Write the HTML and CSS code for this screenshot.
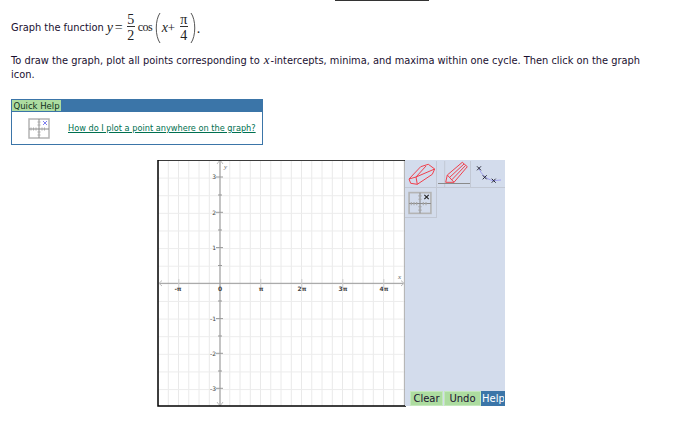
FILE: index.html
```html
<!DOCTYPE html>
<html lang="en">
<head>
    <meta charset="UTF-8">
    <meta name="viewport" content="width=device-width, initial-scale=1.0">
    <title>Graph the function</title>
    <link rel="stylesheet" href="styles.css">
</head>
<body>
    <svg width="0" height="0" class="defs">
        <symbol id="plot-icon" viewBox="0 0 22 21">
            <rect x="1" y="1" width="20" height="19" fill="none" stroke="#b4b4b4" stroke-width="1.500"/>
            <path d="M1 11H21M11 1V20" stroke="#8a8a8a" fill="none"/>
            <path d="M3 9.500V12.500M5.500 9.500V12.500M8 9.500V12.500M14 9.500V12.500M16.500 9.500V12.500M9.500 4H12.500M9.500 7H12.500M9.500 14H12.500M9.500 17H12.500" stroke="#a8a8a8" fill="none"/>
            <path d="M15 3L19 7M19 3L15 7" stroke="currentColor" fill="none"/>
        </symbol>
    </svg>

    <div class="top-bar"></div>

    <div class="page">
        <div class="question">
            <span>Graph the function</span>
            <span class="math">
                <i class="m-y">y</i>
                <span class="m-eq">=</span>
                <span class="frac frac-a"><span class="num">5</span><span class="den">2</span></span>
                <span class="m-cos">cos</span>
                <svg class="paren paren-l" width="7" height="32" viewBox="0 0 7 32"><path d="M6 1C1 8 1 24 6 31" fill="none" stroke="#555"/></svg>
                <i class="m-x">x</i>
                <span class="m-plus">+</span>
                <span class="frac frac-b"><span class="num">&pi;</span><span class="den">4</span></span>
                <svg class="paren paren-r" width="7" height="32" viewBox="0 0 7 32"><path d="M1 1C6 8 6 24 1 31" fill="none" stroke="#555"/></svg>
                <span class="m-dot">.</span>
            </span>
        </div>

        <p class="directions">To draw the graph, plot all points corresponding to <i class="x-var">x</i>-intercepts, minima, and maxima within one cycle. Then click on the graph icon.</p>

        <div class="quick-help">
            <div class="help-head"><span class="help-tab">Quick Help</span></div>
            <div class="help-body">
                <svg class="help-icon"><use href="#plot-icon"/></svg>
                <a href="#" class="help-link">How do I plot a point anywhere on the graph?</a>
            </div>
        </div>

        <div class="graph-row">
            <svg class="plot" width="249" height="247" viewBox="157 160 249 247">
                <defs>
                    <pattern id="grid-v" patternUnits="userSpaceOnUse" x="158.500" y="0" width="10.250" height="20">
                        <path d="M10 0V20" stroke="#e6e6e6" stroke-width="1.200"/>
                    </pattern>
                    <pattern id="grid-h" patternUnits="userSpaceOnUse" x="0" y="160" width="20" height="17.620">
                        <path d="M0 0H20" stroke="#ececec" stroke-width="1.200" transform="translate(0 0.400)"/>
                    </pattern>
                </defs>
                <rect x="158" y="160" width="247" height="246" fill="#fff"/>
                <rect x="158" y="160" width="247" height="246" fill="url(#grid-v)"/>
                <rect x="158" y="160" width="247" height="246" fill="url(#grid-h)"/>

                <path d="M220 161V405" stroke="#c4c4c4" stroke-width="2"/>
                <path d="M160 283.300H403" stroke="#999" stroke-width="1"/>
                <path d="M217 164L220 160L223 164M217 402L220 406L223 402M162 280.500L159 283.300L162 286M401 280.500L404 283.300L401 286" fill="none" stroke="#bbb"/>

                <path d="M216 177H223M218 195H222M216 212.300H223M218 230H222M216 247.600H223M218 265.500H222M218 301H222M216 318.600H223M218 336H222M216 353.300H223M218 371H222M216 388.300H223" stroke="#999" fill="none"/>
                <path d="M178.800 279V288M260.800 279V288M301.800 279V288M342.800 279V288M383.800 279V288" stroke="#ccc" fill="none"/>

                <g class="tick-y" text-anchor="end">
                    <text x="216" y="179">3</text>
                    <text x="216" y="214.500">2</text>
                    <text x="216" y="250">1</text>
                    <text x="216" y="321">-1</text>
                    <text x="216" y="356">-2</text>
                    <text x="216" y="391">-3</text>
                </g>
                <g class="tick-x" text-anchor="middle">
                    <text x="178" y="291">-&pi;</text>
                    <text x="220" y="291">0</text>
                    <text x="261" y="291">&pi;</text>
                    <text x="302" y="291">2&pi;</text>
                    <text x="343" y="291">3&pi;</text>
                    <text x="384" y="291">4&pi;</text>
                </g>
                <text class="axis-name" x="224" y="169">y</text>
                <text class="axis-name" x="398" y="279">x</text>

                <rect x="158" y="160" width="247.500" height="246" fill="none" stroke="#000" stroke-width="1.500"/>
            </svg>

            <div class="toolbar">
                <div class="tools">
                    <div class="tool">
                        <svg width="32" height="27" viewBox="0 0 32 27" fill="none" stroke="#f0404c">
                            <path d="M4 18L15.700 5.700L23.300 3.300L29.700 8L27.300 13.300L12.300 23.300L5.700 22.300Z"/>
                            <path d="M4 18L11 16L29.700 8M11 16L12.300 23.300M11 16L21 5"/>
                        </svg>
                    </div>
                    <div class="tool">
                        <svg width="33" height="27" viewBox="0 0 33 27" fill="none">
                            <path d="M7.700 0V27" stroke="#c2c8d4"/>
                            <path d="M1 22.500H33" stroke="#8a8a8a"/>
                            <path d="M8.700 21.300L10.300 14L25.300 1.300L30.300 5.700L17 21.300ZM10.300 14L17 21.300M12.500 16.500L27 3M14.800 18.800L28.500 4.500" stroke="#f0404c"/>
                        </svg>
                    </div>
                    <div class="tool">
                        <svg width="33" height="27" viewBox="0 0 33 27" fill="none">
                            <path d="M8 7.300C10 13 15 18 22 19.700L30 19" stroke="#a0a0ee"/>
                            <path d="M6 5.300L10 9.300M10 5.300L6 9.300M11.700 14.300L15.700 18.300M15.700 14.300L11.700 18.300M20.700 17.700L24.700 21.700M24.700 17.700L20.700 21.700" stroke="#2a2a3a"/>
                        </svg>
                    </div>
                    <div class="tool tool-graph">
                        <svg class="graph-icon"><use href="#plot-icon"/></svg>
                    </div>
                </div>
                <div class="tool-buttons">
                    <button class="btn btn-clear">Clear</button>
                    <button class="btn btn-undo">Undo</button>
                    <button class="btn btn-help">Help</button>
                </div>
            </div>
        </div>
    </div>
</body>
</html>
```

FILE: styles.css
```css
html, body { margin: 0; padding: 0; background: #fff; }
body { font-family: "DejaVu Sans", Verdana, sans-serif; font-size: 9.850px; color: #1a1030; }
.defs { position: absolute; }
.top-bar { width: 94px; height: 1px; margin-left: 335px; background: #333; }
.page { padding: 0 11px; }

.question { display: flex; align-items: center; height: 33px; margin-top: 10px; }
.math { display: flex; align-items: center; margin-left: 3px; font-family: "Liberation Serif", serif; font-size: 14px; color: #222; }
.m-y { width: 8px; }
.m-eq { width: 8px; }
.m-plus { width: 9px; font-size: 13px; }
.m-x { width: 6px; margin-left: 1px; }
.m-cos { width: 14px; margin-left: 3px; font-size: 12px; letter-spacing: -0.600px; }
.frac { display: flex; flex-direction: column; align-items: center; width: 8px; margin-left: 4px; line-height: 13px; }
.frac-b { margin-left: 3px; }
.num { width: 100%; text-align: center; border-bottom: 1px solid #333; }
.den { margin-top: 2px; }
.paren { margin-left: 2px; }
.m-dot { align-self: flex-end; margin-bottom: 7px; }

.directions { width: 632px; margin: 9px 0 0; line-height: 14px; }
.x-var { margin: 0 1px; font-family: "Liberation Serif", serif; font-size: 13px; }

.quick-help { width: 250px; margin-top: 17px; border: 1px solid #3b75a8; }
.help-head { height: 12px; background: #3b75a8; }
.help-tab { display: block; width: 49px; height: 11px; background: #addca0; color: #103020; font-size: 8.500px; line-height: 12px; text-align: center; }
.help-body { display: flex; align-items: center; height: 32px; }
.help-icon { width: 22px; height: 21px; margin-left: 16px; color: #8080f0; }
.help-link { margin-left: 18px; color: #007050; font-size: 8.200px; white-space: nowrap; }

.graph-row { display: flex; margin: 15px 0 0 146px; }
.plot { display: block; flex: none; }
.tick-y, .tick-x { font-family: "DejaVu Sans", sans-serif; font-size: 6px; fill: #444; }
.tick-x { font-weight: bold; }
.axis-name { font-family: "Liberation Serif", serif; font-style: italic; font-size: 7px; fill: #666; }

.toolbar { display: flex; flex-direction: column; justify-content: space-between; width: 100px; height: 246px; margin-left: -1px; background: #d3dcec; }
.tools { display: grid; grid-template-columns: 32px 34px 34px; grid-template-rows: 27px 30px; margin-top: 1px; }
.tool { border-right: 1px solid #c2c8d4; border-bottom: 1px solid #c2c8d4; box-sizing: border-box; overflow: hidden; }
.tool svg { display: block; }
.tool:nth-child(3) { border-right: 0; }
.graph-icon { width: 24px; height: 24px; margin: 3px 0 0 3px; color: #222; }

.tool-buttons { display: flex; justify-content: flex-end; gap: 1px; }
.btn { height: 15px; padding: 0; border: 1px solid #c4e8bc; background: #addca0; color: #1a1030; font-family: "DejaVu Sans", sans-serif; font-size: 10px; line-height: 12px; }
.btn-clear { width: 33px; }
.btn-undo { width: 37px; }
.btn-help { width: 24px; margin-left: -1px; border-color: #3b75a8; background: #3b75a8; color: #fff; overflow: hidden; }
```
